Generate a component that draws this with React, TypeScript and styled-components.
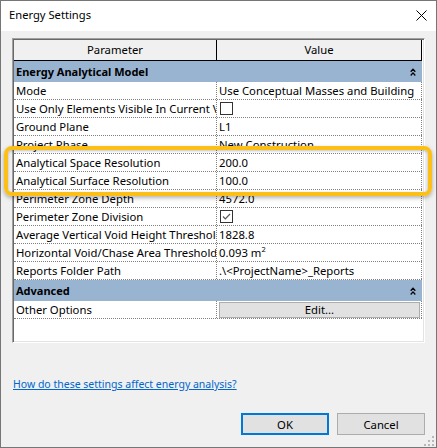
import React from "react";
import styled, { createGlobalStyle } from "styled-components";

const GlobalStyle = createGlobalStyle`
  html, body { margin: 0; padding: 0; background: #f0f0f0; }
  body { font-family: "Segoe UI", "Noto Sans", sans-serif; font-size: 11.3px; color: #000; }
  * { box-sizing: border-box; }
`;

const Window = styled.div`
  position: relative;
  width: 437px;
  height: 448px;
  border: 1px solid #767676;
  display: flex;
  flex-direction: column;
  background: #f0f0f0;
`;

const TitleBar = styled.div`
  height: 30px;
  background: #fff;
  display: flex;
  align-items: center;
  justify-content: space-between;
  padding: 0 9px 2px 8px;
  font-size: 11.2px;
`;

const TitleText = styled.span`
  line-height: 16px;
`;

const CloseBtn = styled.span`
  display: flex;
  width: 12px;
  height: 12px;
  align-items: center;
  justify-content: center;
`;

const Body = styled.div`
  flex: 1;
  display: flex;
  flex-direction: column;
  padding: 7px 11px 0 11px;
`;

const Panel = styled.div`
  width: 413px;
  height: 305px;
  background: #fff;
  border: 1px solid;
  border-color: #a0a0a0 #fff #fff #a0a0a0;
  box-shadow: inset 1px 1px 0 #696969, inset -1px -1px 0 #e3e3e3;
  padding: 1px 2px 1px 1px;
  overflow: hidden;
`;

const Grid = styled.div`
  width: 408px;
  display: flex;
  flex-direction: column;
`;

const HeaderRow = styled.div`
  display: grid;
  grid-template-columns: 203px 205px;
  height: 21px;
`;

const HeaderCell = styled.div`
  background: #f0f0f0;
  border-right: 1px solid #000;
  border-bottom: 1px solid #000;
  display: flex;
  align-items: center;
  justify-content: center;
  line-height: 16px;
`;

const CategoryRow = styled.div`
  height: 21px;
  background: #99b4d1;
  display: flex;
  align-items: center;
  justify-content: space-between;
  padding: 0 6px 0 2px;
  font-weight: bold;
  font-size: 11px;
`;

const DataRow = styled.div`
  display: grid;
  grid-template-columns: 203px 205px;
  height: 18px;
  border-bottom: 1px dotted #808080;
`;

const Cell = styled.div`
  display: flex;
  align-items: center;
  white-space: nowrap;
  overflow: hidden;
  padding-left: 2px;
  border-right: 1px dotted #808080;
  line-height: 16px;
`;

const Check = styled.span`
  display: inline-flex;
  width: 13px;
  height: 13px;
  border: 1px solid #333;
  background: #fff;
  align-items: center;
  justify-content: center;
  margin-left: 1px;
`;

const EditButton = styled.div`
  flex: 1;
  height: 16px;
  margin-right: 1px;
  background: #e1e1e1;
  border: 1px solid #adadad;
  display: flex;
  align-items: center;
  justify-content: center;
  line-height: 14px;
`;

const Sup = styled.sup`
  font-size: 7.5px;
  line-height: 0;
  vertical-align: 5px;
`;

const HelpLink = styled.a`
  margin-top: 33px;
  margin-left: 1px;
  color: #0066cc;
  text-decoration: underline;
  font-size: 10.5px;
  line-height: 16px;
  align-self: flex-start;
  cursor: pointer;
`;

const ButtonRow = styled.div`
  margin-top: 21px;
  display: flex;
  justify-content: flex-end;
  gap: 8px;
`;

const DialogButton = styled.button<{ $default?: boolean }>`
  width: 88px;
  height: 22px;
  background: #e1e1e1;
  border: ${(p) => (p.$default ? "2px solid #0078d7" : "1px solid #adadad")};
  font-family: inherit;
  font-size: 11.3px;
  color: #000;
  padding: 0;
`;

const Highlight = styled.div`
  position: absolute;
  left: 3px;
  top: 145px;
  width: 428px;
  height: 50px;
  border: 4px solid #fbbf17;
  border-radius: 8px;
  box-shadow: 0 2px 4px rgba(0, 0, 0, 0.3), inset 0 1px 3px rgba(0, 0, 0, 0.25);
  pointer-events: none;
`;

const Grip = styled.div`
  position: absolute;
  right: 1px;
  bottom: 1px;
  width: 11px;
  height: 11px;
`;

const Chevron = () => (
  <svg width="6" height="8" viewBox="0 0 6 8">
    <path d="M0.7 3.8 L3 1.2 L5.3 3.8 M0.7 7.5 L3 4.9 L5.3 7.5" fill="none" stroke="#000" strokeWidth="1.3" />
  </svg>
);

type Row =
  | { kind: "cat"; label: string }
  | { kind: "data"; label: string; value: React.ReactNode };

const rows: Row[] = [
  { kind: "cat", label: "Energy Analytical Model" },
  { kind: "data", label: "Mode", value: "Use Conceptual Masses and Building" },
  {
    kind: "data",
    label: "Use Only Elements Visible In Current View",
    value: <Check />,
  },
  { kind: "data", label: "Ground Plane", value: "L1" },
  { kind: "data", label: "Project Phase", value: "New Construction" },
  { kind: "data", label: "Analytical Space Resolution", value: "200.0" },
  { kind: "data", label: "Analytical Surface Resolution", value: "100.0" },
  { kind: "data", label: "Perimeter Zone Depth", value: "4572.0" },
  {
    kind: "data",
    label: "Perimeter Zone Division",
    value: (
      <Check>
        <svg width="11" height="11" viewBox="0 0 11 11">
          <path d="M2 5.5 L4.3 7.8 L9 3" fill="none" stroke="#555" strokeWidth="1.2" />
        </svg>
      </Check>
    ),
  },
  { kind: "data", label: "Average Vertical Void Height Threshold", value: "1828.8" },
  {
    kind: "data",
    label: "Horizontal Void/Chase Area Threshold",
    value: (
      <span>
        0.093 m<Sup>2</Sup>
      </span>
    ),
  },
  { kind: "data", label: "Reports Folder Path", value: ".\\<ProjectName>_Reports" },
  { kind: "cat", label: "Advanced" },
  { kind: "data", label: "Other Options", value: <EditButton>Edit...</EditButton> },
];

export default function App() {
  return (
    <>
      <GlobalStyle />
      <Window>
        <TitleBar>
          <TitleText>Energy Settings</TitleText>
          <CloseBtn>
            <svg width="11" height="11" viewBox="0 0 11 11">
              <path d="M0.5 0.5 L10.5 10.5 M10.5 0.5 L0.5 10.5" stroke="#000" strokeWidth="1" />
            </svg>
          </CloseBtn>
        </TitleBar>
        <Body>
          <Panel>
            <Grid>
              <HeaderRow>
                <HeaderCell>Parameter</HeaderCell>
                <HeaderCell>Value</HeaderCell>
              </HeaderRow>
              {rows.map((r, i) =>
                r.kind === "cat" ? (
                  <CategoryRow key={i}>
                    <span>{r.label}</span>
                    <Chevron />
                  </CategoryRow>
                ) : (
                  <DataRow key={i}>
                    <Cell>{r.label}</Cell>
                    <Cell>{r.value}</Cell>
                  </DataRow>
                )
              )}
            </Grid>
          </Panel>
          <HelpLink>How do these settings affect energy analysis?</HelpLink>
          <ButtonRow>
            <DialogButton $default>OK</DialogButton>
            <DialogButton>Cancel</DialogButton>
          </ButtonRow>
        </Body>
        <Highlight />
        <Grip>
          <svg width="11" height="11" viewBox="0 0 11 11">
            {[
              [8, 0],
              [8, 4],
              [4, 4],
              [8, 8],
              [4, 8],
              [0, 8],
            ].map(([x, y], i) => (
              <rect key={i} x={x} y={y} width="2" height="2" fill="#b8b8b8" />
            ))}
          </svg>
        </Grip>
      </Window>
    </>
  );
}
